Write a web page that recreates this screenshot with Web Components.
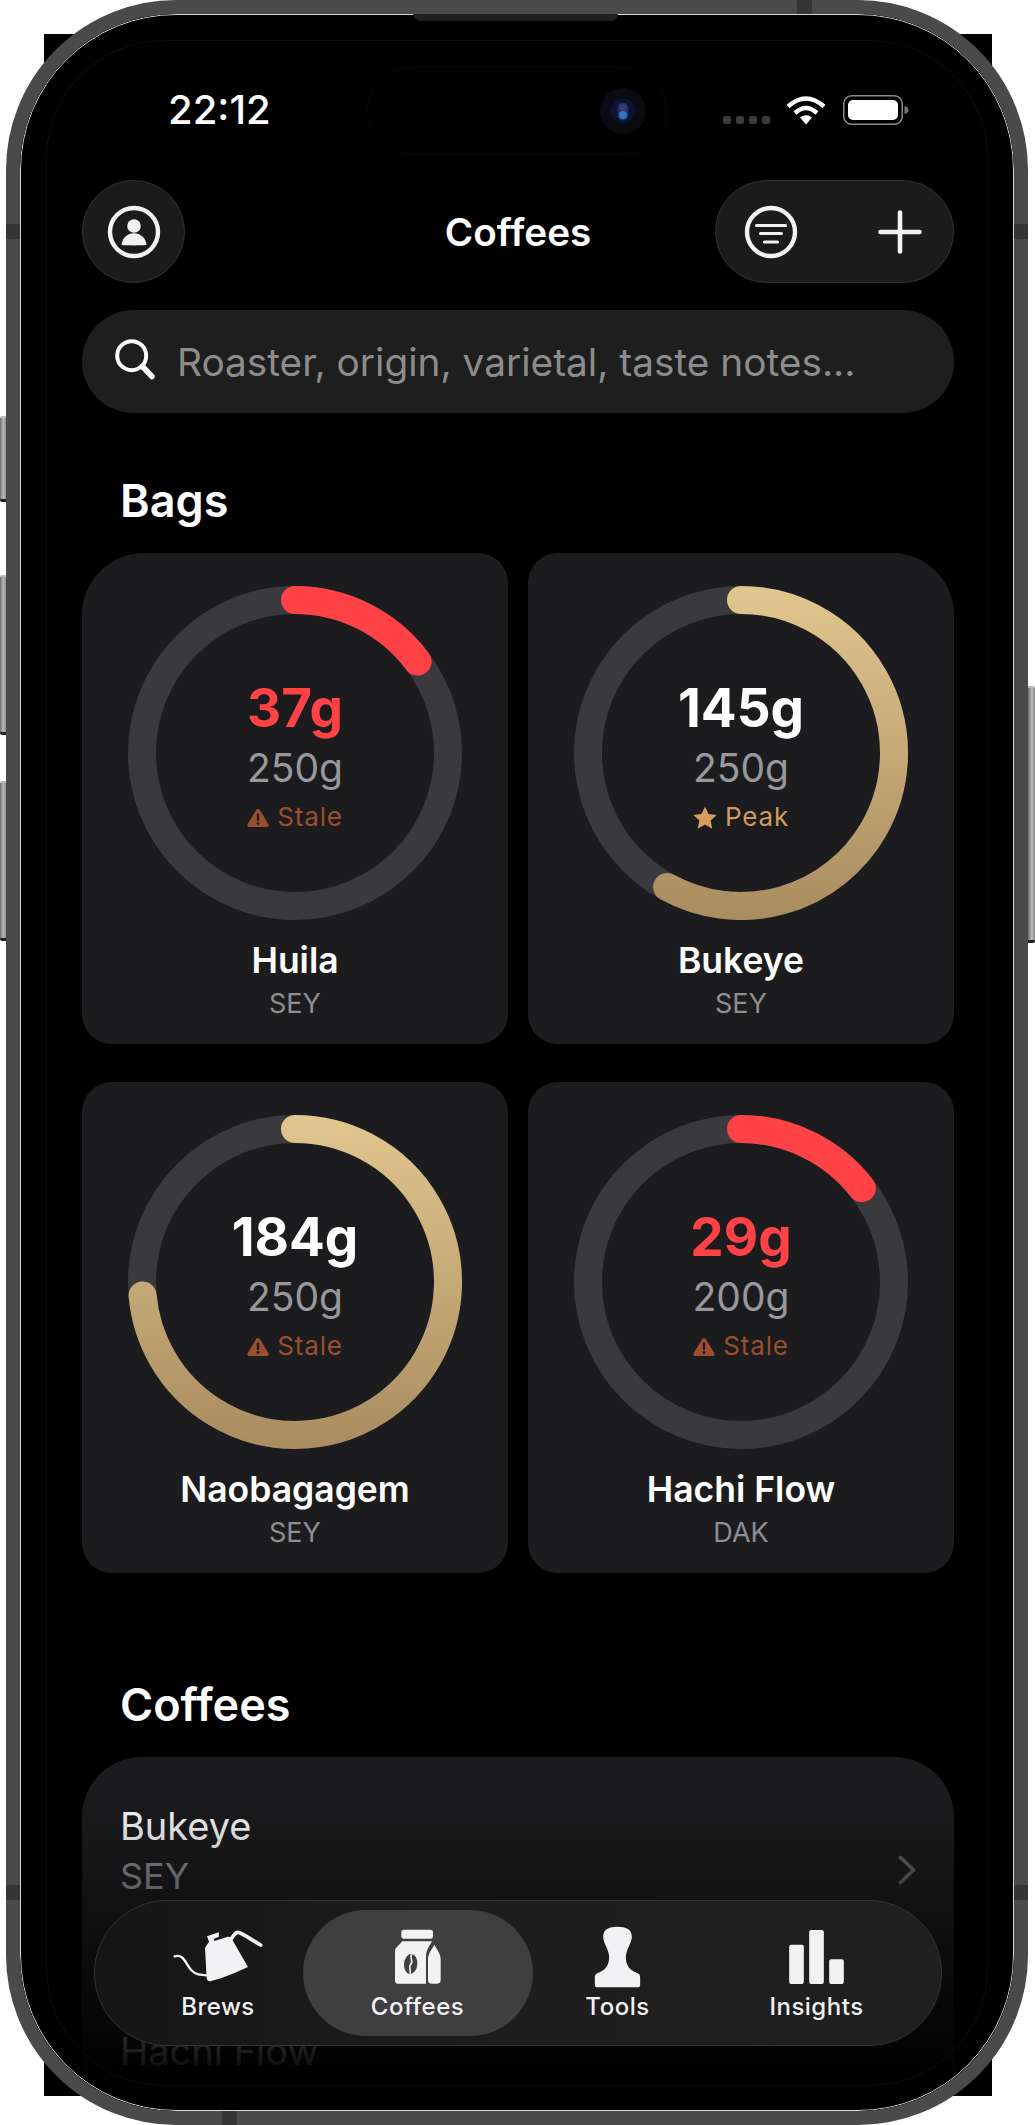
<!DOCTYPE html>
<html lang="en">
<head>
<meta charset="utf-8">
<title>Coffees</title>
<style>
  html, body { margin: 0; background: #fff; }
  body { height: 2125px; overflow: hidden; font-family: Inter, "Liberation Sans", sans-serif; color: #fff; }
  .bags-title { margin: 60px 0 24px; }
  .coffees-title { margin: 104px 0 24px; }
</style>
</head>
<body>
<phone-frame>
  <status-bar></status-bar>
  <app-header title="Coffees"></app-header>
  <search-field placeholder="Roaster, origin, varietal, taste notes..."></search-field>
  <section-title class="bags-title">Bags</section-title>
  <bag-grid>
    <bag-card name="Huila" roaster="SEY" left="37" size="250" status="stale" corner="tl"></bag-card>
    <bag-card name="Bukeye" roaster="SEY" left="145" size="250" status="peak" corner="tr"></bag-card>
    <bag-card name="Naobagagem" roaster="SEY" left="184" size="250" status="stale"></bag-card>
    <bag-card name="Hachi Flow" roaster="DAK" left="29" size="200" status="stale"></bag-card>
  </bag-grid>
  <section-title class="coffees-title">Coffees</section-title>
  <coffee-list>
    <coffee-row name="Bukeye" roaster="SEY"></coffee-row>
    <coffee-row name="Hachi Flow"></coffee-row>
  </coffee-list>
  <tab-bar slot="overlay">
    <tab-item label="Brews" icon="kettle"></tab-item>
    <tab-item label="Coffees" icon="bag" active></tab-item>
    <tab-item label="Tools" icon="tamper"></tab-item>
    <tab-item label="Insights" icon="bars"></tab-item>
  </tab-bar>
</phone-frame>

<script>
// helper: class with a static shadow template
function shadow(el, html) {
  el.attachShadow({ mode: 'open' }).innerHTML = html;
}

class PhoneFrame extends HTMLElement {
  constructor() {
    super();
    shadow(this, `
      <style>
        :host { display: block; position: relative; width: 1022px; height: 2125px; margin-left: 6px; box-sizing: border-box; }
        .backing { position: absolute; left: 38px; top: 34px; width: 948px; height: 2062px; background: #000; }
        .body { position: absolute; inset: 0; box-sizing: border-box; border: 14px solid #4a4a4a; border-radius: 170px; background: #000; }
        .screen { position: relative; height: 100%; box-sizing: border-box; padding: 0 60px 0 62px; border-radius: 156px; overflow: hidden; background: #000; }
        .fade { position: absolute; left: 0; right: 0; top: 1776px; bottom: 0; z-index: 1; pointer-events: none;
          background: linear-gradient(rgba(0,0,0,0), #000 295px); }
        .rim { position: absolute; inset: 0; z-index: 3; border: 1.5px solid #d8d8d8; border-radius: 156px; pointer-events: none; }
        .inner-line { position: absolute; left: 26px; right: 26px; top: 26px; height: 2044px; z-index: 2; border: 1px solid #0d0d0d; border-radius: 118px; pointer-events: none; }
        .speaker { position: absolute; left: 393px; top: -1px; width: 205px; height: 8px; z-index: 4; background: #1f1f1f; border-radius: 0 0 8px 8px; }
        .band { position: absolute; background: #353535; }
        .btn { position: absolute; width: 6px; background: linear-gradient(90deg, #6d6d6d, #b9b9b9 55%, #8a8a8a);
          border-top: 2px solid #bdbdbd; border-bottom: 3px solid #222; box-sizing: border-box; }
        .btn.l { left: -6px; border-radius: 2px 0 0 2px; }
        .btn.r { right: -7px; width: 7px; border-radius: 0 2px 2px 0; }
      </style>
      <div class="backing"></div>
      <div class="btn l" style="top:416px;height:86px"></div>
      <div class="btn l" style="top:575px;height:160px"></div>
      <div class="btn l" style="top:781px;height:160px"></div>
      <div class="btn r" style="top:686px;height:257px"></div>
      <div class="body">
        <div class="screen">
          <slot></slot>
          <div class="fade"></div>
          <div class="inner-line"></div>
          <slot name="overlay"></slot>
          <div class="rim"></div>
          <div class="speaker"></div>
        </div>
      </div>
      <div class="band" style="left:791px;top:0;width:15px;height:14px"></div>
      <div class="band" style="left:216px;bottom:0;width:15px;height:14px"></div>
      <div class="band" style="left:0;top:224px;width:14px;height:15px"></div>
      <div class="band" style="right:0;top:224px;width:14px;height:15px"></div>
      <div class="band" style="left:0;top:1885px;width:14px;height:15px"></div>
      <div class="band" style="right:0;top:1885px;width:14px;height:15px"></div>
    `);
  }
}

class StatusBar extends HTMLElement {
  constructor() {
    super();
    shadow(this, `
      <style>
        :host { display: flex; position: relative; height: 166px; box-sizing: border-box; padding: 72px 45px 0 86px; justify-content: space-between; align-items: flex-start; }
        .time { font: 500 40px/48px Inter, sans-serif; color: #fff; }
        .right { display: flex; align-items: center; height: 48px; }
        .dots { display: flex; gap: 5px; margin: 20px 16px 0 0; }
        .dots i { width: 8px; height: 8px; border-radius: 2px; background: #3b3b3d; }
        .island { position: absolute; left: 285px; top: 53px; width: 300px; height: 88px; border: 1px solid #070707; border-radius: 44px; box-sizing: border-box; }
        .cam { position: absolute; left: 518px; top: 74px; }
        svg { display: block; }
      </style>
      <div class="time">22:12</div>
      <div class="island"></div>
      <svg class="cam" width="46" height="46" viewBox="0 0 46 46">
        <circle cx="23" cy="23" r="23" fill="#0a0a10"/>
        <circle cx="23" cy="23" r="12.5" fill="#0d1230"/>
        <rect x="17.5" y="14.5" width="11" height="18" rx="5.5" fill="#232a66"/>
        <circle cx="23" cy="19.5" r="3.5" fill="#3b3d6b"/>
        <circle cx="23" cy="27" r="4" fill="#2f78b8"/>
      </svg>
      <div class="right">
        <div class="dots"><i></i><i></i><i></i><i></i></div>
        <svg width="40" height="30" viewBox="0 0 40 30" fill="none" stroke="#fff" stroke-width="4.4">
          <path d="M2 11.5Q20-4.5 38 11.5"/>
          <path d="M9 18Q20 8 31 18"/>
          <path d="M14 22.5Q20 18 26 22.5L20 29.5Z" fill="#fff" stroke="none"/>
        </svg>
        <svg style="margin-left:17px" width="66" height="30" viewBox="0 0 66 30">
          <rect x=".75" y=".75" width="58.5" height="28.5" rx="8" fill="none" stroke="#8b8b8d" stroke-width="1.5"/>
          <rect x="5" y="5" width="50" height="20" rx="5" fill="#fff"/>
          <path d="M61.5 11c2.500.5 4 2 4 4s-1.500 3.500-4 4z" fill="#77777a"/>
        </svg>
      </div>
    `);
  }
}

class AppHeader extends HTMLElement {
  constructor() {
    super();
    shadow(this, `
      <style>
        :host { display: flex; position: relative; height: 103px; justify-content: space-between; align-items: center; }
        .round { box-sizing: border-box; height: 103px; background: #1b1b1b; border: 1.5px solid #333; border-radius: 52px; display: flex; align-items: center; }
        .profile { width: 103px; justify-content: center; }
        .actions { width: 239px; padding-left: 25px; gap: 77px; }
        h1 { position: absolute; left: 0; right: 0; margin: 0; text-align: center; font: 600 38.7px/48px Inter, sans-serif; color: #fff; }
        svg { display: block; flex: none; }
      </style>
      <div class="round profile">
        <svg width="60" height="60" viewBox="0 0 60 60">
          <circle cx="30" cy="30" r="24" fill="none" stroke="#f2f2f2" stroke-width="4.4"/>
          <circle cx="30" cy="24" r="6.8" fill="#f2f2f2"/>
          <path d="M17.500 43c.500-7 6-11.800 12.500-11.800S42 36 42.500 43c-6 .5-19 .5-25 0z" fill="#f2f2f2"/>
        </svg>
      </div>
      <h1>${this.getAttribute('title')}</h1>
      <div class="round actions">
        <svg width="60" height="60" viewBox="0 0 60 60" fill="none" stroke="#f2f2f2" stroke-linecap="round">
          <circle cx="30" cy="30" r="24" stroke-width="4.4"/>
          <path d="M15.500 23.500h29M19.500 31.500h21M23.500 40h13" stroke-width="3.2"/>
        </svg>
        <svg width="44" height="44" viewBox="0 0 44 44" fill="none" stroke="#f2f2f2" stroke-width="4.6" stroke-linecap="round">
          <path d="M22 2.500v39M2.500 22h39"/>
        </svg>
      </div>
    `);
  }
}

class SearchField extends HTMLElement {
  constructor() {
    super();
    shadow(this, `
      <style>
        :host { display: flex; box-sizing: border-box; height: 103px; margin-top: 27px; padding-left: 32px; gap: 15px; align-items: center; background: #1e1e1e; border-radius: 52px; }
        span { font: 400 38.8px/48px Inter, sans-serif; color: #8c8c8c; white-space: nowrap; }
        svg { display: block; flex: none; }
      </style>
      <svg width="48" height="48" viewBox="0 0 48 48" fill="none" stroke="#fff" stroke-linecap="round">
        <circle cx="17.700" cy="17.700" r="14.500" stroke-width="4"/>
        <path d="M28.500 28.500l9.500 10" stroke-width="5.500"/>
      </svg>
      <span>${this.getAttribute('placeholder')}</span>
    `);
  }
}

class SectionTitle extends HTMLElement {
  constructor() {
    super();
    shadow(this, `
      <style>
        :host { display: block; padding-left: 38px; font: 600 45px/56px Inter, sans-serif; color: #fff; }
      </style>
      <slot></slot>
    `);
  }
}

class BagGrid extends HTMLElement {
  constructor() {
    super();
    shadow(this, `
      <style>
        :host { display: grid; grid-template-columns: 426px 426px; column-gap: 20px; row-gap: 38px; }
      </style>
      <slot></slot>
    `);
  }
}

const WARN = `<svg width="22" height="19" viewBox="0 0 22 19"><path d="M11 1c.8 0 1.400.4 1.800 1.100l8.500 14c.8 1.400 0 2.900-1.700 2.900H2.400C.7 19-.1 17.500.7 16.100l8.500-14C9.600 1.400 10.200 1 11 1z" fill="#9a4f2e"/><path d="M11 5.500v7.500" stroke="#1c1c1e" stroke-width="2.200"/><circle cx="11" cy="15.500" r="1.400" fill="#1c1c1e"/></svg>`;
const STAR = `<svg width="24" height="23" viewBox="0 0 24 23"><path d="M12 .5l3.500 7.600 8.200.9-6.100 5.600 1.700 8.100L12 18.600l-7.300 4.100 1.700-8.100L.3 9l8.200-.9z" fill="#d79f5c"/></svg>`;

let ringId = 0;

class BagCard extends HTMLElement {
  constructor() {
    super();
    const left = +this.getAttribute('left');
    const size = +this.getAttribute('size');
    const pct = left / size * 100;
    const low = pct < 20;
    const stale = this.getAttribute('status') === 'stale';
    const corner = this.getAttribute('corner');
    const id = 'ring' + ringId++;
    shadow(this, `
      <style>
        :host { display: block; box-sizing: border-box; height: 491px; padding-top: 33px; background: #1c1c1e; text-align: center;
          border-radius: ${corner === 'tl' ? 62 : 30}px ${corner === 'tr' ? 62 : 30}px 30px 30px; }
        .stack { display: grid; width: 334px; height: 334px; margin: 0 auto; }
        .stack > * { grid-area: 1 / 1; }
        .center { display: flex; flex-direction: column; align-items: center; padding-top: 90px; box-sizing: border-box; }
        svg { display: block; }
        .left { font: 700 53px/64px Inter, sans-serif; color: ${low ? '#ff4245' : '#fff'}; }
        .size { margin-top: 4px; font: 400 39px/48px Inter, sans-serif; color: #98989d; }
        .status { display: flex; align-items: center; gap: 8px; margin-top: 9px; font: 400 26px/32px Inter, sans-serif; letter-spacing: .8px; color: ${stale ? '#9a4f2e' : '#d19a5a'}; }
        .name { margin-top: 20px; font: 600 35.5px/42px Inter, sans-serif; color: #fff; }
        .roaster { margin-top: 4px; font: 400 27px/36px Inter, sans-serif; color: #8e8e93; }
      </style>
      <div class="stack">
        <svg width="334" height="334" viewBox="0 0 334 334" fill="none">
          <defs>
            <linearGradient id="${id}" gradientUnits="userSpaceOnUse" x1="167" y1="0" x2="167" y2="334">
              <stop offset="0" stop-color="#e2c68f"/><stop offset="1" stop-color="#a98c5f"/>
            </linearGradient>
          </defs>
          <circle cx="167" cy="167" r="153" stroke="#3a3a3c" stroke-width="28"/>
          <path d="M167 14a153 153 0 1 1-.01 0" pathLength="100" stroke="${low ? '#ff4245' : 'url(#' + id + ')'}" stroke-width="28" stroke-linecap="round" stroke-dasharray="${pct} 200"/>
        </svg>
        <div class="center">
          <div class="left">${left}g</div>
          <div class="size">${size}g</div>
          <div class="status">${stale ? WARN : STAR}<span>${stale ? 'Stale' : 'Peak'}</span></div>
        </div>
      </div>
      <div class="name">${this.getAttribute('name')}</div>
      <div class="roaster">${this.getAttribute('roaster')}</div>
    `);
  }
}

class CoffeeList extends HTMLElement {
  constructor() {
    super();
    shadow(this, `
      <style>
        :host { display: block; box-sizing: border-box; height: 340px; padding-top: 46px; background: #1c1c1e; border-radius: 60px 60px 0 0; }
      </style>
      <slot></slot>
    `);
  }
}

class CoffeeRow extends HTMLElement {
  constructor() {
    super();
    const roaster = this.getAttribute('roaster');
    shadow(this, `
      <style>
        :host { display: block; position: relative; padding: 0 38px; margin-bottom: 132px; }
        .name { font: 400 38px/46px Inter, sans-serif; color: #fff; }
        .roaster { margin-top: 7px; font: 400 36px/40px Inter, sans-serif; color: #8e8e93; }
        svg { position: absolute; right: 38px; top: 52px; display: block; }
      </style>
      <div class="name">${this.getAttribute('name')}</div>
      ${roaster ? `<div class="roaster">${roaster}</div>
      <svg width="18" height="30" viewBox="0 0 18 30" fill="none" stroke="#636366" stroke-width="3.600" stroke-linecap="round" stroke-linejoin="round"><path d="M2.500 2.500L15.500 15 2.500 27.500"/></svg>` : ''}
    `);
  }
}

class TabBar extends HTMLElement {
  constructor() {
    super();
    shadow(this, `
      <style>
        :host { position: absolute; left: 74px; top: 1886px; z-index: 2; box-sizing: border-box; width: 848px; height: 146px; padding: 8.500px 0 0 24px;
          display: grid; grid-template-columns: 198px 201px 199px 199px; align-items: start;
          background: linear-gradient(90deg, #161616, #1d1d1d 50%, #202020); border: 1.500px solid #333; border-radius: 73px; }
      </style>
      <slot></slot>
    `);
  }
}

const TAB_ICONS = {
  kettle: `<svg width="90" height="55" viewBox="70 90 270 165">
    <path d="M166 146L178 128L172 112L207 100L208 113L192 120L194 126L232 114C240 112 245 118 250 126L295 204C260 220 220 238 184 246C176 248 172 244 171 236Z" fill="#f2f2f4"/>
    <path d="M75 172c28-8 32 22 50 42 12 13 28 14 48 15" fill="none" stroke="#f2f2f4" stroke-width="7" stroke-linecap="round"/>
    <path d="M243 122c8-10 12-22 22-22 10 0 40 22 68 38" fill="none" stroke="#f2f2f4" stroke-width="11" stroke-linecap="round" stroke-linejoin="round"/>
  </svg>`,
  bag: `<svg width="48" height="56" viewBox="70 58 144 168">
    <rect x="92" y="60" width="95" height="27" rx="8" fill="#f2f2f4"/>
    <path d="M94 95h90c-6 12-18 26-18 46v81H82c-5 0-9-4-9-9v-88c0-12 14-18 21-30z" fill="#f2f2f4"/>
    <path d="M191 105c6 12 19 26 19 44v63c0 6-4 10-10 10h-18c-6 0-10-4-10-10v-63c0-18 13-32 19-44z" fill="#f2f2f4"/>
    <ellipse cx="120" cy="163" rx="20" ry="30" transform="rotate(6 120 163)" fill="#3f3f3f"/>
    <path d="M123 134c-9 12 8 20-3 30-8 8 2 18-2 28" fill="none" stroke="#f2f2f4" stroke-width="5"/>
  </svg>`,
  tamper: `<svg width="47" height="62" viewBox="70 46 140 186">
    <path d="M140 48c26 0 43 8 43 30 0 20-18 38-18 62 0 26 14 40 32 46 8 3 11 7 11 14v22c0 5-3 8-8 8H80c-5 0-8-3-8-8v-22c0-7 3-11 11-14 18-6 32-20 32-46 0-24-18-42-18-62 0-22 17-30 43-30z" fill="#f2f2f4"/>
  </svg>`,
  bars: `<svg width="55" height="54" viewBox="664 60 164 162" fill="#f2f2f4">
    <rect x="664" y="104" width="44" height="118" rx="6"/>
    <rect x="724" y="60" width="44" height="162" rx="6"/>
    <rect x="784" y="148" width="44" height="74" rx="6"/>
  </svg>`
};

class TabItem extends HTMLElement {
  constructor() {
    super();
    const active = this.hasAttribute('active');
    shadow(this, `
      <style>
        :host { display: flex; flex-direction: column; align-items: center; box-sizing: border-box; height: 126px; padding-top: 16px;
          ${active ? 'margin: 0 -14.500px; background: #3f3f3f; border-radius: 63px;' : ''} }
        .icon { display: flex; align-items: center; justify-content: center; height: 62px; }
        svg { display: block; }
        .label { margin-top: 4px; font: 500 24px/30px Inter, sans-serif; letter-spacing: .5px; color: #f2f2f4; }
      </style>
      <div class="icon">${TAB_ICONS[this.getAttribute('icon')]}</div>
      <div class="label">${this.getAttribute('label')}</div>
    `);
  }
}

customElements.define('phone-frame', PhoneFrame);
customElements.define('status-bar', StatusBar);
customElements.define('app-header', AppHeader);
customElements.define('search-field', SearchField);
customElements.define('section-title', SectionTitle);
customElements.define('bag-grid', BagGrid);
customElements.define('bag-card', BagCard);
customElements.define('coffee-list', CoffeeList);
customElements.define('coffee-row', CoffeeRow);
customElements.define('tab-bar', TabBar);
customElements.define('tab-item', TabItem);
</script>
</body>
</html>
